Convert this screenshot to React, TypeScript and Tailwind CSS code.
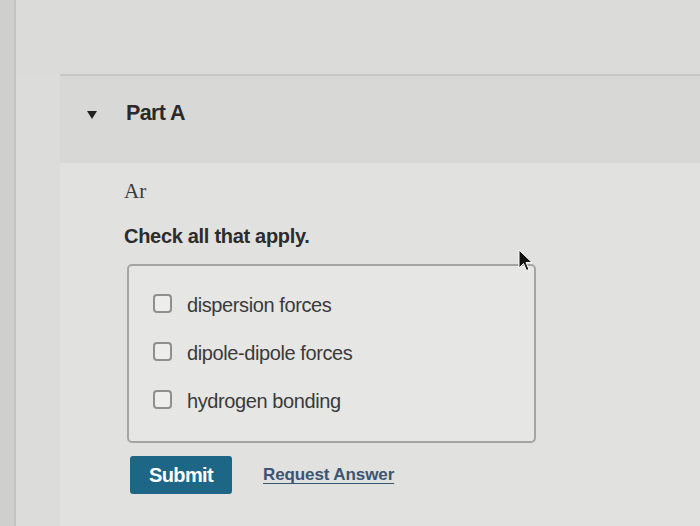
import React from "react";

function Checkbox() {
  return (
    <span className="w-[19px] h-[19px] rounded-[4px] border-2 border-[#8f8f8f] bg-[#ededec] shrink-0" />
  );
}

export default function App() {
  const font = { fontFamily: "Arial, 'Liberation Sans', Helvetica, sans-serif" };
  return (
    <div className="w-[700px] h-[526px] bg-[#dcdcda] flex overflow-hidden relative" style={font}>
      <div className="w-[16px] h-full bg-[#cfcfcd] border-r-2 border-[#c4c4c2] shrink-0" />
      <div className="flex-1 flex flex-col">
        <div className="h-[74px] bg-[#dbdbd9] shrink-0" />
        <div className="ml-[44px] flex-1 flex flex-col">
          <div className="h-[89px] shrink-0 bg-[#d8d8d6] border-t-2 border-[#c6c6c4] flex items-center pl-[26px] pb-[12px]">
            <svg width="12" height="10" viewBox="0 0 12 10" className="mt-[2px]">
              <path d="M1 1 L11 1 L6 9 Z" fill="#222" />
            </svg>
            <span className="ml-[28px] text-[21.5px] font-bold text-[#2a2a2a] tracking-[-0.6px]">Part A</span>
          </div>
          <div className="bg-[#e1e1df] flex-1 pl-[64px] pt-[14px] flex flex-col">
            <div className="text-[21px] text-[#3a3a3a] leading-[28px]" style={{ fontFamily: "'Liberation Serif', 'DejaVu Serif', serif" }}>
              Ar
            </div>
            <div className="mt-[19px] text-[20px] font-bold text-[#2c2c2c] leading-[24px] tracking-[-0.3px]">
              Check all that apply.
            </div>
            <div className="mt-[16px] ml-[3px] w-[409px] h-[179px] border-2 border-[#a5a5a3] rounded-[5px] bg-[#e6e6e4] flex flex-col pl-[24px] pt-[28px] gap-[30px]">
              {["dispersion forces", "dipole-dipole forces", "hydrogen bonding"].map((t) => (
                <div key={t} className="flex items-center gap-[15px] h-[18px]">
                  <Checkbox />
                  <span className="text-[20px] text-[#3a3a3a] tracking-[-0.4px] mt-[3px]">{t}</span>
                </div>
              ))}
            </div>
            <div className="mt-[13px] ml-[6px] flex items-center">
              <button className="w-[102px] h-[38px] rounded-[3px] bg-[#1d6686] text-white text-[20px] font-bold tracking-[-0.6px]">
                Submit
              </button>
              <span className="ml-[31px] text-[17px] font-bold text-[#3c5573] underline underline-offset-[3px] tracking-[-0.1px]">
                Request Answer
              </span>
            </div>
          </div>
        </div>
      </div>
      <svg className="absolute left-[517px] top-[249px]" width="18" height="24" viewBox="0 0 18 24">
        <path d="M2 1 L2 19 L6.5 14.5 L9.5 21.5 L12 20.5 L9 13.5 L15 13.5 Z" fill="#111" stroke="#fff" strokeWidth="1" />
      </svg>
    </div>
  );
}
